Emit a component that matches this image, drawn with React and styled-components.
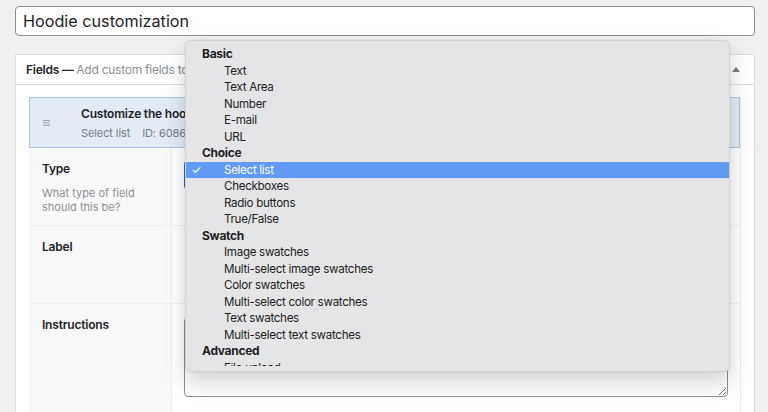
import React from "react"
import styled, { createGlobalStyle } from "styled-components";

const GlobalStyle = createGlobalStyle`
    html, body {
        margin: 0;
        background: #f0f0f1;
        font-family: Inter, "Liberation Sans", sans-serif;
        color: #1d2327;
    }
    * { box-sizing: border-box; }
`;

const Page = styled.div`
    position: relative;
    width: 768px;
    height: 412px;
    overflow: hidden;
    padding: 6px 13px 0 15px;
    display: flex;
    flex-direction: column;
`;

const TitleInput = styled.input`
    flex-shrink: 0;
    width: 100%;
    height: 30px;
    border: 1px solid #8c8f94;
    border-radius: 4px;
    padding: 0 7px;
    font-family: inherit;
    font-size: 16.2px;
    color: #1d2327;
    background: #fff;
    outline: none;
`;

const Postbox = styled.div`
    flex-shrink: 0;
    margin-top: 18px;
    background: #fff;
    border: 1px solid #dcdcde;
`;

const PostboxHeader = styled.div`
    height: 30px;
    border-bottom: 1px solid #dcdcde;
    display: flex;
    align-items: center;
    justify-content: space-between;
    padding: 0 10px 0 10px;
`;

const PostboxTitle = styled.h2`
    margin: 0;
    font-size: 12px;
    letter-spacing: -0.25px;
    font-weight: 600;
    color: #1d2327;
    span {
        font-weight: 400;
        color: #8c8f94;
    }
`;

const ToggleArrow = styled.span`
    width: 0;
    height: 0;
    border-left: 4px solid transparent;
    border-right: 4px solid transparent;
    border-bottom: 5px solid #787c82;
    margin-right: 4px;
`;

const PostboxBody = styled.div`
    padding: 12px 13px 0 13px;
`;

const FieldObject = styled.div`
    border-right: 1px solid #ececec;
`;

const FieldHandle = styled.div`
    height: 51px;
    background: #e2ebf6;
    border: 1px solid #a9c5e6;
    display: flex;
    align-items: center;
    padding-left: 13px;
`;

const DragIcon = styled.svg`
    width: 7px;
    height: 6px;
    margin-right: 31px;
    flex-shrink: 0;
`;

const FieldMeta = styled.div`
    display: flex;
    flex-direction: column;
    gap: 5px;
`;

const FieldLabel = styled.div`
    font-size: 12px;
    letter-spacing: -0.2px;
    font-weight: 600;
`;

const FieldInfo = styled.div`
    font-size: 11px;
    letter-spacing: -0.1px;
    color: #787c82;
    display: flex;
    gap: 12px;
`;

const SettingRow = styled.div`
    display: grid;
    grid-template-columns: 143px 1fr;
    height: ${p => p.$h}px;
    border-bottom: 1px solid #f0f0f1;
`;

const LabelCell = styled.div`
    background: #f9f9f9;
    border-right: 1px solid #eeeeee;
    padding: 13px 12px 0 13px;
`;

const SettingName = styled.div`
    font-size: 12px;
    letter-spacing: -0.2px;
    font-weight: 600;
    color: #1d2327;
`;

const SettingHint = styled.p`
    margin: 10px 0 0;
    font-size: 11px;
    line-height: 14px;
    color: #8c8f94;
`;

const ValueCell = styled.div`
    padding: ${p => p.$pt}px 12px 0 12px;
`;

const SelectBox = styled.div`
    height: 30px;
    border: 1px solid #2271b1;
    border-radius: 4px;
    background: #fff;
`;

const TextArea = styled.textarea`
    display: block;
    width: 100%;
    height: 80px;
    border: 1px solid #8c8f94;
    border-radius: 4px;
    resize: vertical;
    background: #fff;
`;

const Menu = styled.div`
    position: absolute;
    left: 185px;
    top: 40px;
    width: 545px;
    height: 332px;
    padding: 5px 0;
    background: #e5e5e7;
    border: 1px solid #d3d3d6;
    border-radius: 6px;
    box-shadow: 0 10px 22px rgba(0, 0, 0, 0.18), 0 0 2px rgba(0, 0, 0, 0.08);
`;

const MenuScroll = styled.div`
    height: 320px;
    overflow: hidden;
`;

const GroupHeader = styled.div`
    height: 16.5px;
    line-height: 16.5px;
    padding-left: 16px;
    font-size: 12px;
    letter-spacing: -0.3px;
    font-weight: 700;
    color: #1f1f1f;
`;

const MenuItem = styled.div`
    position: relative;
    height: 16.5px;
    line-height: 16.5px;
    padding-left: 38px;
    font-size: 11.6px;
    letter-spacing: -0.3px;
    color: ${p => p.$active ? "#fff" : "#222"};
    background: ${p => p.$active ? "#629bf6" : "transparent"};
`;

const Check = styled.span`
    position: absolute;
    left: 5px;
    top: 0;
    font-size: 12px;
`;

const groups = [
    { name: "Basic", items: ["Text", "Text Area", "Number", "E-mail", "URL"] },
    { name: "Choice", items: ["Select list", "Checkboxes", "Radio buttons", "True/False"] },
    { name: "Swatch", items: ["Image swatches", "Multi-select image swatches", "Color swatches", "Multi-select color swatches", "Text swatches", "Multi-select text swatches"] },
    { name: "Advanced", items: ["File upload", "Date picker"] },
]

export default function App() {
    const selected = "Select list"

    return (
        <>
            <GlobalStyle />
            <Page>
                <TitleInput readOnly value="Hoodie customization" />
                <Postbox>
                    <PostboxHeader>
                        <PostboxTitle>
                            Fields — <span>Add custom fields to your product</span>
                        </PostboxTitle>
                        <ToggleArrow />
                    </PostboxHeader>
                    <PostboxBody>
                        <FieldObject>
                            <FieldHandle>
                                <DragIcon viewBox="0 0 7 6">
                                    <rect x="0" y="0" width="7" height="1.2" fill="#a7aaad" />
                                    <rect x="0" y="2.4" width="7" height="1.2" fill="#a7aaad" />
                                    <rect x="0" y="4.8" width="7" height="1.2" fill="#a7aaad" />
                                </DragIcon>
                                <FieldMeta>
                                    <FieldLabel>Customize the hoodie</FieldLabel>
                                    <FieldInfo>
                                        <span>Select list</span>
                                        <span>ID: 6086472a1b3c</span>
                                    </FieldInfo>
                                </FieldMeta>
                            </FieldHandle>
                            <SettingRow $h={78}>
                                <LabelCell>
                                    <SettingName>Type</SettingName>
                                    <SettingHint>What type of field should this be?</SettingHint>
                                </LabelCell>
                                <ValueCell $pt={12}>
                                    <SelectBox />
                                </ValueCell>
                            </SettingRow>
                            <SettingRow $h={78}>
                                <LabelCell>
                                    <SettingName>Label</SettingName>
                                </LabelCell>
                                <ValueCell $pt={14} />
                            </SettingRow>
                            <SettingRow $h={120}>
                                <LabelCell>
                                    <SettingName>Instructions</SettingName>
                                </LabelCell>
                                <ValueCell $pt={13}>
                                    <TextArea readOnly />
                                </ValueCell>
                            </SettingRow>
                        </FieldObject>
                    </PostboxBody>
                </Postbox>

                <Menu>
                    <MenuScroll>
                        {groups.map(g => (
                            <React.Fragment key={g.name}>
                                <GroupHeader>{g.name}</GroupHeader>
                                {g.items.map(item => (
                                    <MenuItem key={item} $active={item === selected}>
                                        {item === selected && <Check>✓</Check>}
                                        {item}
                                    </MenuItem>
                                ))}
                            </React.Fragment>
                        ))}
                    </MenuScroll>
                </Menu>
            </Page>
        </>
    )
}
